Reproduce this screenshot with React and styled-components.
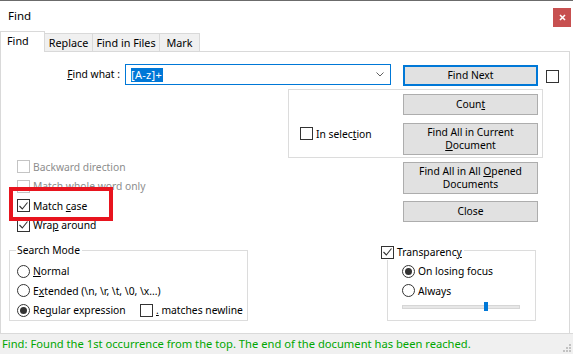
import React from 'react';
import styled, { createGlobalStyle } from 'styled-components';

const GlobalStyle = createGlobalStyle`
  html, body {
    margin: 0;
    padding: 0;
    background: #fff;
  }
  body {
    font-family: "Noto Sans", "Open Sans", sans-serif;
    font-size: 10.3px;
    color: #000;
  }
  * { box-sizing: border-box; }
`;

const Window = styled.div`
  width: 573px;
  height: 354px;
  border-top: 1px solid #6b6b6b;
  display: flex;
  flex-direction: column;
  overflow: hidden;
  background: #fff;
`;

const TitleBar = styled.div`
  height: 30px;
  display: flex;
  justify-content: space-between;
  align-items: flex-start;
  padding-left: 8px;
`;

const Title = styled.span`
  line-height: 30px;
  font-size: 11.5px;
`;

const CloseButton = styled.div`
  width: 18px;
  height: 19px;
  margin-top: 7px;
  margin-right: 2px;
  background: #c75050;
  display: flex;
  align-items: center;
  justify-content: center;
`;

const TabStrip = styled.div`
  height: 20px;
  display: flex;
  align-items: flex-end;
`;

const Tab = styled.div`
  position: relative;
  z-index: ${({ $active }) => ($active ? 2 : 1)};
  width: ${({ $w }) => $w}px;
  height: ${({ $active }) => ($active ? 21 : 18)}px;
  margin-bottom: ${({ $active }) => ($active ? -1 : 0)}px;
  margin-right: -1px;
  border: 1px solid #d9d9d9;
  border-bottom: none;
  background: ${({ $active }) => ($active ? '#fff' : '#f0f0f0')};
  display: flex;
  align-items: ${({ $active }) => ($active ? 'flex-start' : 'center')};
  justify-content: ${({ $active }) => ($active ? 'flex-start' : 'center')};
  padding: ${({ $active }) => ($active ? '1px 0 0 6px' : '0')};
  font-size: 10.8px;
  line-height: 16px;
  white-space: nowrap;
`;

const Panel = styled.div`
  width: 570px;
  height: 282px;
  border: 1px solid #d9d9d9;
  border-bottom: none;
  background: #fff;
  display: flex;
  flex-direction: column;
`;

const TopRow = styled.div`
  margin-top: 12px;
  height: 22px;
  display: flex;
  align-items: flex-start;
`;

const FieldLabel = styled.div`
  width: 119px;
  height: 21px;
  line-height: 21px;
  text-align: right;
  margin-right: 5px;
`;

const Combo = styled.div`
  width: 266px;
  height: 21px;
  border: 1px solid #0078d7;
  display: flex;
  align-items: center;
  padding: 0 5px;
`;

const Selection = styled.span`
  background: #0078d7;
  color: #fff;
  height: 14px;
  line-height: 14px;
  padding-right: 1px;
  font-size: 11px;
  letter-spacing: 0.3px;
`;

const Chevron = styled.svg`
  margin-left: auto;
  margin-right: 1px;
`;

const Button = styled.div`
  width: 135px;
  height: ${({ $h }) => $h || 21}px;
  margin-top: ${({ $mt }) => $mt || 0}px;
  margin-left: ${({ $ml }) => $ml || 0}px;
  background: #e1e1e1;
  border: ${({ $default }) => ($default ? '2px solid #0078d7' : '1px solid #adadad')};
  display: flex;
  align-items: center;
  justify-content: center;
  text-align: center;
  line-height: 13px;
`;

const Box = styled.span`
  width: 13px;
  height: 13px;
  flex: none;
  border: 1px solid ${({ $disabled }) => ($disabled ? '#c4c4c4' : '#333')};
  background: #fff;
  display: flex;
  align-items: center;
  justify-content: center;
  margin-top: ${({ $mt }) => $mt || 0}px;
  margin-left: ${({ $ml }) => $ml || 0}px;
`;

const Circle = styled.span`
  width: 13px;
  height: 13px;
  flex: none;
  border-radius: 50%;
  border: 1px solid #333;
  background: #fff;
  display: flex;
  align-items: center;
  justify-content: center;

  &::after {
    content: '';
    width: 7px;
    height: 7px;
    border-radius: 50%;
    background: #333;
    display: ${({ $on }) => ($on ? 'block' : 'none')};
  }
`;

const Middle = styled.div`
  margin-top: 3px;
  height: 157px;
  display: flex;
`;

const LeftCol = styled.div`
  width: 287px;
  padding: 68px 0 0 16px;
  display: flex;
  flex-direction: column;
`;

const OptionRow = styled.div`
  position: relative;
  height: 19.5px;
  display: flex;
  align-items: center;
  gap: 3px;
  white-space: nowrap;
  color: ${({ $disabled }) => ($disabled ? '#8d8d8d' : '#000')};
`;

const Highlight = styled.div`
  position: absolute;
  left: -8px;
  top: -9px;
  width: 104px;
  height: 34px;
  border: 4px solid #e8141e;
  z-index: 3;
`;

const RightCol = styled.div`
  width: 255px;
  display: flex;
  flex-direction: column;
`;

const SelectionGroup = styled.div`
  height: 69px;
  border: 1px solid #dcdcdc;
  display: flex;
`;

const SelectionArea = styled.div`
  width: 114px;
  padding: 34px 0 0 11px;
`;

const ButtonStack = styled.div`
  display: flex;
  flex-direction: column;
  gap: ${({ $gap }) => $gap}px;
  padding-top: ${({ $pt }) => $pt || 0}px;
  margin-left: ${({ $ml }) => $ml || 0}px;
  margin-top: ${({ $mt }) => $mt || 0}px;
`;

const Bottom = styled.div`
  display: flex;
  align-items: flex-start;
`;

const GroupBox = styled.div`
  position: relative;
  width: ${({ $w }) => $w}px;
  height: 71px;
  margin-left: ${({ $ml }) => $ml}px;
  margin-top: 4px;
  border: 1px solid #dcdcdc;
  padding: 10.25px 0 0 ${({ $pl }) => $pl}px;
  display: flex;
  flex-direction: column;
`;

const Caption = styled.div`
  position: absolute;
  left: ${({ $left }) => $left}px;
  top: ${({ $top }) => $top}px;
  height: 16px;
  line-height: 16px;
  background: #fff;
  padding: 0 2px 0 1px;
  display: flex;
  align-items: center;
  gap: 3px;
  white-space: nowrap;
`;

const OptionText = styled.span`
  width: ${({ $w }) => ($w ? `${$w}px` : 'auto')};
`;

const Slider = styled.div`
  position: relative;
  width: 118px;
  height: 4px;
  margin-top: 5px;
  background: #e7e7e7;
  border: 1px solid #d6d6d6;
`;

const Thumb = styled.div`
  position: absolute;
  left: 81px;
  top: -4px;
  width: 4px;
  height: 9px;
  background: #0078d7;
`;

const StatusBar = styled.div`
  position: relative;
  height: 21px;
  background: #f0f0f0;
  border-top: 1px solid #dadada;
  padding-left: 2px;
  line-height: 20px;
  font-size: 11.2px;
  color: #00a600;
  white-space: nowrap;
`;

const Grip = styled.svg`
  position: absolute;
  right: 1px;
  bottom: 1px;
`;

const Check = () => (
  <svg width="9" height="8" viewBox="0 0 9 8">
    <path d="M0.5 4 L3.3 7 L8.5 0.5" fill="none" stroke="#333" strokeWidth="1.1" />
  </svg>
);

const CheckBox = ({ checked, disabled, mt, ml }) => (
  <Box $disabled={disabled} $mt={mt} $ml={ml}>{checked && <Check />}</Box>
);

const App = () => {
  return (
    <>
      <GlobalStyle />
      <Window>
        <TitleBar>
          <Title>Find</Title>
          <CloseButton>
            <svg width="7" height="7" viewBox="0 0 7 7">
              <path d="M1 1 L6 6 M6 1 L1 6" stroke="#fff" strokeWidth="1.6" />
            </svg>
          </CloseButton>
        </TitleBar>

        <TabStrip>
          <Tab $active $w={45}>Find</Tab>
          <Tab $w={49}>Replace</Tab>
          <Tab $w={68}>Find in Files</Tab>
          <Tab $w={41}>Mark</Tab>
        </TabStrip>

        <Panel>
          <TopRow>
            <FieldLabel><u>F</u>ind what :</FieldLabel>
            <Combo>
              <Selection>[A-z]+</Selection>
              <Chevron width="8" height="5" viewBox="0 0 8 5">
                <path d="M0.5 0.5 L4 4 L7.5 0.5" fill="none" stroke="#606060" strokeWidth="1" />
              </Chevron>
            </Combo>
            <Button $default $ml={12} $mt={1}><span>Find Next</span></Button>
            <CheckBox mt={6} ml={8} />
          </TopRow>

          <Middle>
            <LeftCol>
              <OptionRow $disabled>
                <CheckBox disabled />
                <span>Backward direction</span>
              </OptionRow>
              <OptionRow $disabled>
                <CheckBox disabled />
                <span>Match whole word only</span>
              </OptionRow>
              <OptionRow>
                <CheckBox checked />
                <span>Match <u>c</u>ase</span>
                <Highlight />
              </OptionRow>
              <OptionRow>
                <CheckBox checked />
                <span>Wra<u>p</u> around</span>
              </OptionRow>
            </LeftCol>

            <RightCol>
              <SelectionGroup>
                <SelectionArea>
                  <OptionRow>
                    <CheckBox />
                    <span>In selec<u>t</u>ion</span>
                  </OptionRow>
                </SelectionArea>
                <ButtonStack $gap={8} $pt={4}>
                  <Button><span>Coun<u>t</u></span></Button>
                  <Button $h={32}><span>Find All in Current<br /><u>D</u>ocument</span></Button>
                </ButtonStack>
              </SelectionGroup>
              <ButtonStack $gap={7} $ml={115} $mt={4}>
                <Button $h={32}><span>Find All in All <u>O</u>pened<br />Documents</span></Button>
                <Button><span>Close</span></Button>
              </ButtonStack>
            </RightCol>
          </Middle>

          <Bottom>
            <GroupBox $w={239} $ml={8} $pl={7}>
              <Caption $left={6} $top={-9}>Search Mode</Caption>
              <OptionRow>
                <Circle />
                <span><u>N</u>ormal</span>
              </OptionRow>
              <OptionRow>
                <Circle />
                <span>E<u>x</u>tended (\n, \r, \t, \0, \x...)</span>
              </OptionRow>
              <OptionRow>
                <Circle $on />
                <OptionText $w={104}>Re<u>g</u>ular expression</OptionText>
                <CheckBox />
                <span><u>.</u> matches newline</span>
              </OptionRow>
            </GroupBox>

            <GroupBox $w={149} $ml={139} $pl={14}>
              <Caption $left={-8} $top={-7}>
                <CheckBox checked />
                <span>Transparenc<u>y</u></span>
              </Caption>
              <OptionRow>
                <Circle $on />
                <span>On losing focus</span>
              </OptionRow>
              <OptionRow>
                <Circle />
                <span>Always</span>
              </OptionRow>
              <Slider>
                <Thumb />
              </Slider>
            </GroupBox>
          </Bottom>
        </Panel>

        <StatusBar>
          Find: Found the 1st occurrence from the top. The end of the document has been reached.
          <Grip width="9" height="9" viewBox="0 0 9 9">
            <g fill="#c2c2c2">
              <rect x="6" y="0" width="2" height="2" />
              <rect x="3" y="3" width="2" height="2" />
              <rect x="6" y="3" width="2" height="2" />
              <rect x="0" y="6" width="2" height="2" />
              <rect x="3" y="6" width="2" height="2" />
              <rect x="6" y="6" width="2" height="2" />
            </g>
          </Grip>
        </StatusBar>
      </Window>
    </>
  );
};

export default App;
